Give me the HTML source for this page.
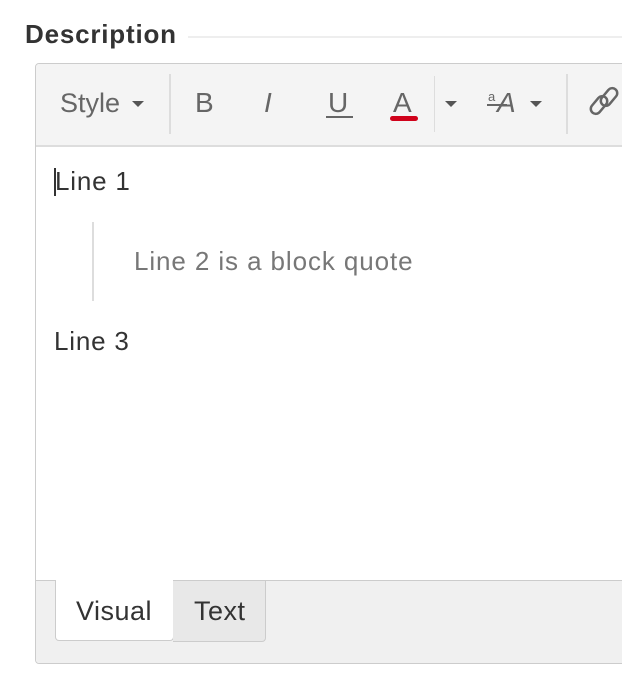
<!DOCTYPE html>
<html><head><style>
body{margin:0;width:622px;height:686px;background:#fff;font-family:"Liberation Sans",sans-serif;position:relative;overflow:hidden;color:#333}
.a{position:absolute}
</style></head><body>
<div class="a" style="left:25px;top:19px;font-size:26px;font-weight:bold;color:#333;letter-spacing:0.8px">Description</div>
<div class="a" style="left:188px;top:36px;width:440px;height:2px;background:#eee"></div>
<div class="a" style="left:35px;top:63px;width:600px;height:599px;border:1px solid #ccc;border-radius:4px;background:#fff"></div>
<div class="a" style="left:36px;top:64px;width:600px;height:81px;background:#f4f4f4;border-bottom:2px solid #ddd;border-radius:4px 0 0 0"></div>
<div class="a" style="left:60px;top:88px;font-size:27px;color:#666">Style</div>
<div class="a" style="left:132px;top:101px;border:6px solid transparent;border-top:6px solid #555;border-bottom:0"></div>
<div class="a" style="left:169px;top:74px;width:2px;height:60px;background:#ddd"></div>
<div class="a" style="left:195px;top:87px;font-size:28px;color:#666">B</div>
<div class="a" style="left:264px;top:87px;font-size:28px;color:#666;font-style:italic">I</div>
<div class="a" style="left:328px;top:87px;font-size:28px;color:#666">U</div>
<div class="a" style="left:326px;top:116px;width:27px;height:2px;background:#666"></div>
<div class="a" style="left:393px;top:87px;font-size:28px;color:#666">A</div>
<div class="a" style="left:390px;top:116px;width:28px;height:5px;border-radius:3px;background:#d0021b"></div>
<div class="a" style="left:434px;top:76px;width:1px;height:56px;background:#ddd"></div>
<div class="a" style="left:445px;top:101px;border:6px solid transparent;border-top:6px solid #555;border-bottom:0"></div>
<div class="a" style="left:488px;top:89px;font-size:13px;color:#666">a</div>
<div class="a" style="left:497px;top:87px;font-size:28px;color:#666;font-style:italic">A</div>
<div class="a" style="left:487px;top:104px;width:20px;height:2px;background:#666"></div>
<div class="a" style="left:530px;top:101px;border:6px solid transparent;border-top:6px solid #555;border-bottom:0"></div>
<div class="a" style="left:566px;top:74px;width:2px;height:60px;background:#ddd"></div>
<svg class="a" style="left:586px;top:86px" width="36" height="34" viewBox="0 0 36 34" fill="none" stroke="#666" stroke-width="2.5"><rect x="3" y="14" width="20" height="10" rx="5" transform="rotate(-50 13 19)"/><rect x="13" y="6" width="20" height="10" rx="5" transform="rotate(-50 23 11)"/></svg>
<div class="a" style="left:54px;top:168px;width:2px;height:28px;background:#333"></div>
<div class="a" style="left:55px;top:166px;font-size:26px;letter-spacing:0.8px;color:#333">Line 1</div>
<div class="a" style="left:92px;top:222px;width:2px;height:79px;background:#ddd"></div>
<div class="a" style="left:134px;top:246px;font-size:26px;letter-spacing:0.9px;color:#777">Line 2 is a block quote</div>
<div class="a" style="left:54px;top:326px;font-size:26px;letter-spacing:0.8px;color:#333">Line 3</div>
<div class="a" style="left:36px;top:580px;width:600px;height:82px;background:#f0f0f0;border-top:1px solid #ccc;border-radius:0 0 0 4px"></div>
<div class="a" style="left:55px;top:580px;width:117px;height:60px;background:#fff;border:1px solid #ccc;border-top:none;border-radius:0 0 4px 4px"></div>
<div class="a" style="left:173px;top:580px;width:92px;height:60px;background:#e8e8e8;border:1px solid #ccc;border-left:none;border-radius:0 0 4px 0"></div>
<div class="a" style="left:76px;top:596px;font-size:27px;letter-spacing:0.5px;color:#333">Visual</div>
<div class="a" style="left:194px;top:596px;font-size:27px;letter-spacing:0.5px;color:#333">Text</div>
</body></html>
